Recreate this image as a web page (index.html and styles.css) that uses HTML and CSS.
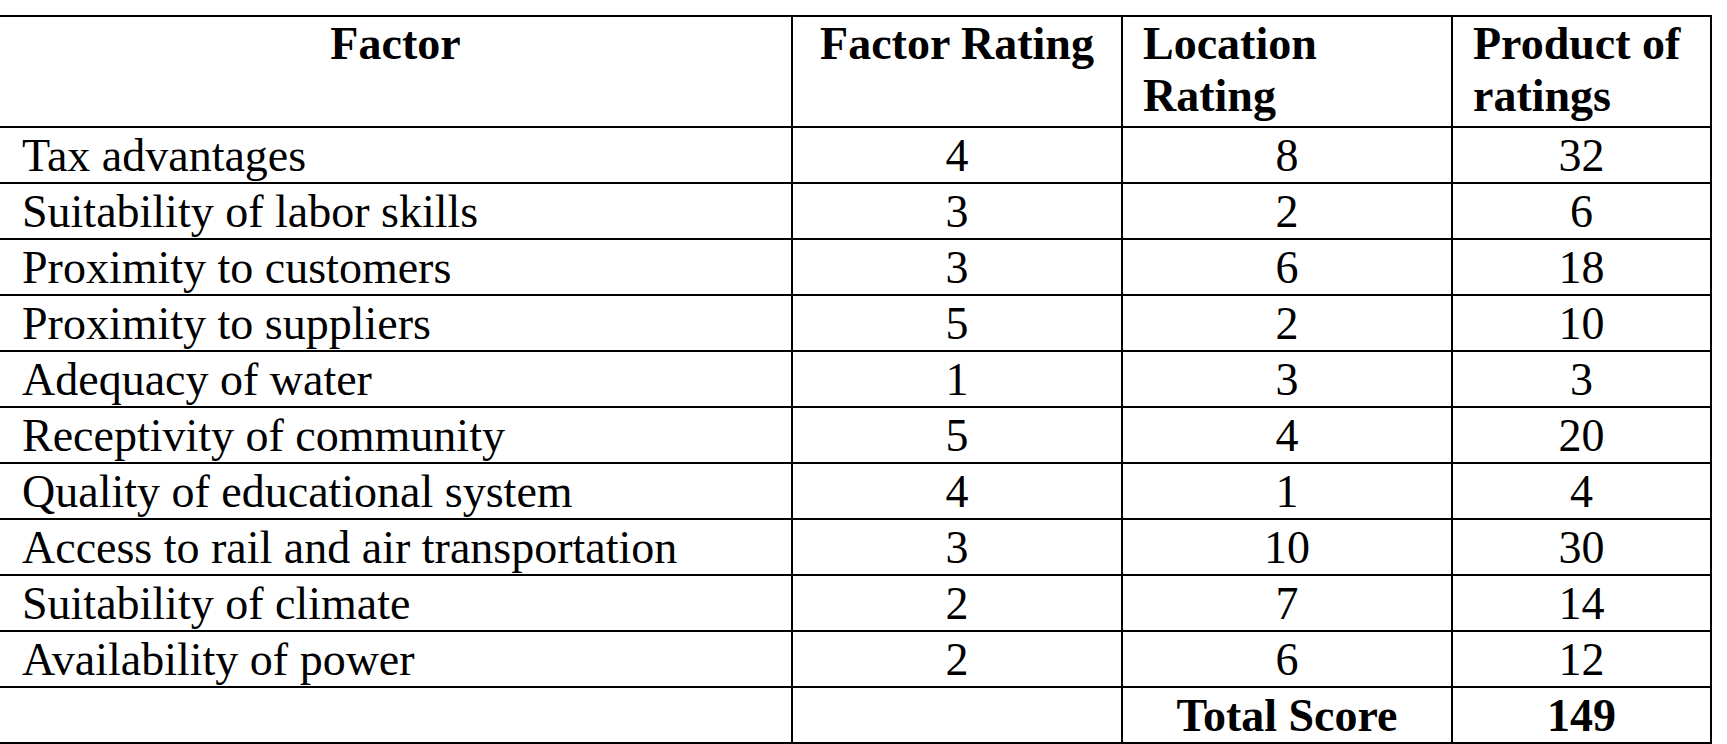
FILE: index.html
```html
<!DOCTYPE html>
<html lang="en">
<head>
<meta charset="utf-8">
<title>Factor Rating</title>
<link rel="stylesheet" href="styles.css">
</head>
<body>
<table class="ratings">
  <colgroup>
    <col class="c-factor">
    <col class="c-frate">
    <col class="c-lrate">
    <col class="c-prod">
  </colgroup>
  <thead>
    <tr class="head-row">
      <th class="center">Factor</th>
      <th class="center">Factor Rating</th>
      <th class="left">Location Rating</th>
      <th class="left">Product of ratings</th>
    </tr>
  </thead>
  <tbody>
    <tr><td class="name">Tax advantages</td><td>4</td><td>8</td><td>32</td></tr>
    <tr><td class="name">Suitability of labor skills</td><td>3</td><td>2</td><td>6</td></tr>
    <tr><td class="name">Proximity to customers</td><td>3</td><td>6</td><td>18</td></tr>
    <tr><td class="name">Proximity to suppliers</td><td>5</td><td>2</td><td>10</td></tr>
    <tr><td class="name">Adequacy of water</td><td>1</td><td>3</td><td>3</td></tr>
    <tr><td class="name">Receptivity of community</td><td>5</td><td>4</td><td>20</td></tr>
    <tr><td class="name">Quality of educational system</td><td>4</td><td>1</td><td>4</td></tr>
    <tr><td class="name">Access to rail and air transportation</td><td>3</td><td>10</td><td>30</td></tr>
    <tr><td class="name">Suitability of climate</td><td>2</td><td>7</td><td>14</td></tr>
    <tr><td class="name">Availability of power</td><td>2</td><td>6</td><td>12</td></tr>
    <tr class="total-row"><td class="name">&nbsp;</td><td>&nbsp;</td><td class="strong">Total Score</td><td class="strong">149</td></tr>
  </tbody>
</table>
</body>
</html>
```
FILE: styles.css
```css
html, body {
  margin: 0;
  padding: 0;
  background: #ffffff;
}

body {
  padding-top: 15px;
  font-family: "Liberation Serif", "Times New Roman", serif;
  color: #000000;
}

.ratings {
  border-collapse: collapse;
  table-layout: fixed;
  width: 1711px;
  font-size: 46px;
  line-height: 52px;
}

.c-factor { width: 792px; }
.c-frate { width: 330px; }
.c-lrate { width: 330px; }
.c-prod { width: 259px; }

.ratings th,
.ratings td {
  border: 2px solid #000000;
  padding: 2px 20px 0 20px;
  vertical-align: top;
  text-align: center;
  font-weight: normal;
}

.ratings th:first-child,
.ratings td:first-child {
  border-left: none;
}

.ratings th {
  font-weight: bold;
  padding-top: 1px;
  padding-bottom: 4px;
}

.ratings th.left {
  text-align: left;
}

.ratings td.name {
  text-align: left;
  padding-left: 22px;
}

.ratings td.strong {
  font-weight: bold;
}
```
